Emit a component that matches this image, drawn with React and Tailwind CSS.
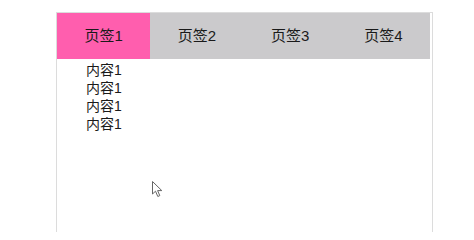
import React, { useState } from 'react';
import { clsx } from 'clsx';

const tabs = ['页签1', '页签2', '页签3', '页签4'];

export default function App() {
    const [active, setActive] = useState(0);

    return (
        <div
            className="relative w-[474px] h-[232px] bg-white overflow-hidden pt-[12px] pl-[56px]"
            style={{ fontFamily: '"Liberation Sans", "Noto Sans CJK SC", sans-serif' }}
        >
            <div className="w-[377px] h-[240px] border border-[#dcdcdc] pr-[2px] flex flex-col">
                {/* tab bar */}
                <div className="flex h-[46px] bg-[#cbcacc]">
                    {tabs.map((t, i) => (
                        <button
                            key={t}
                            onClick={() => setActive(i)}
                            className={clsx(
                                'flex-1 flex items-center justify-center text-[15px] text-[#1a1a1a]',
                                i === active ? 'bg-[#ff5eae]' : 'bg-[#cbcacc]'
                            )}
                        >
                            {t}
                        </button>
                    ))}
                </div>

                {/* content */}
                <ul className="pl-[29px] pt-[2px] text-[14px] leading-[18px] text-[#1a1a1a]">
                    <li>内容{active + 1}</li>
                    <li>内容{active + 1}</li>
                    <li>内容{active + 1}</li>
                    <li>内容{active + 1}</li>
                </ul>
            </div>

            {/* mouse pointer captured in the screenshot */}
            <svg className="absolute left-[152px] top-[181px]" width="12" height="17" viewBox="0 0 12 17">
                <path d="M0.5 0.5 L0.5 13 L3.5 10.2 L5.8 15.5 L7.8 14.6 L5.6 9.6 L9.8 9.6 Z" fill="#fff" stroke="#666" strokeWidth="1" strokeLinejoin="round" />
            </svg>
        </div>
    );
}
